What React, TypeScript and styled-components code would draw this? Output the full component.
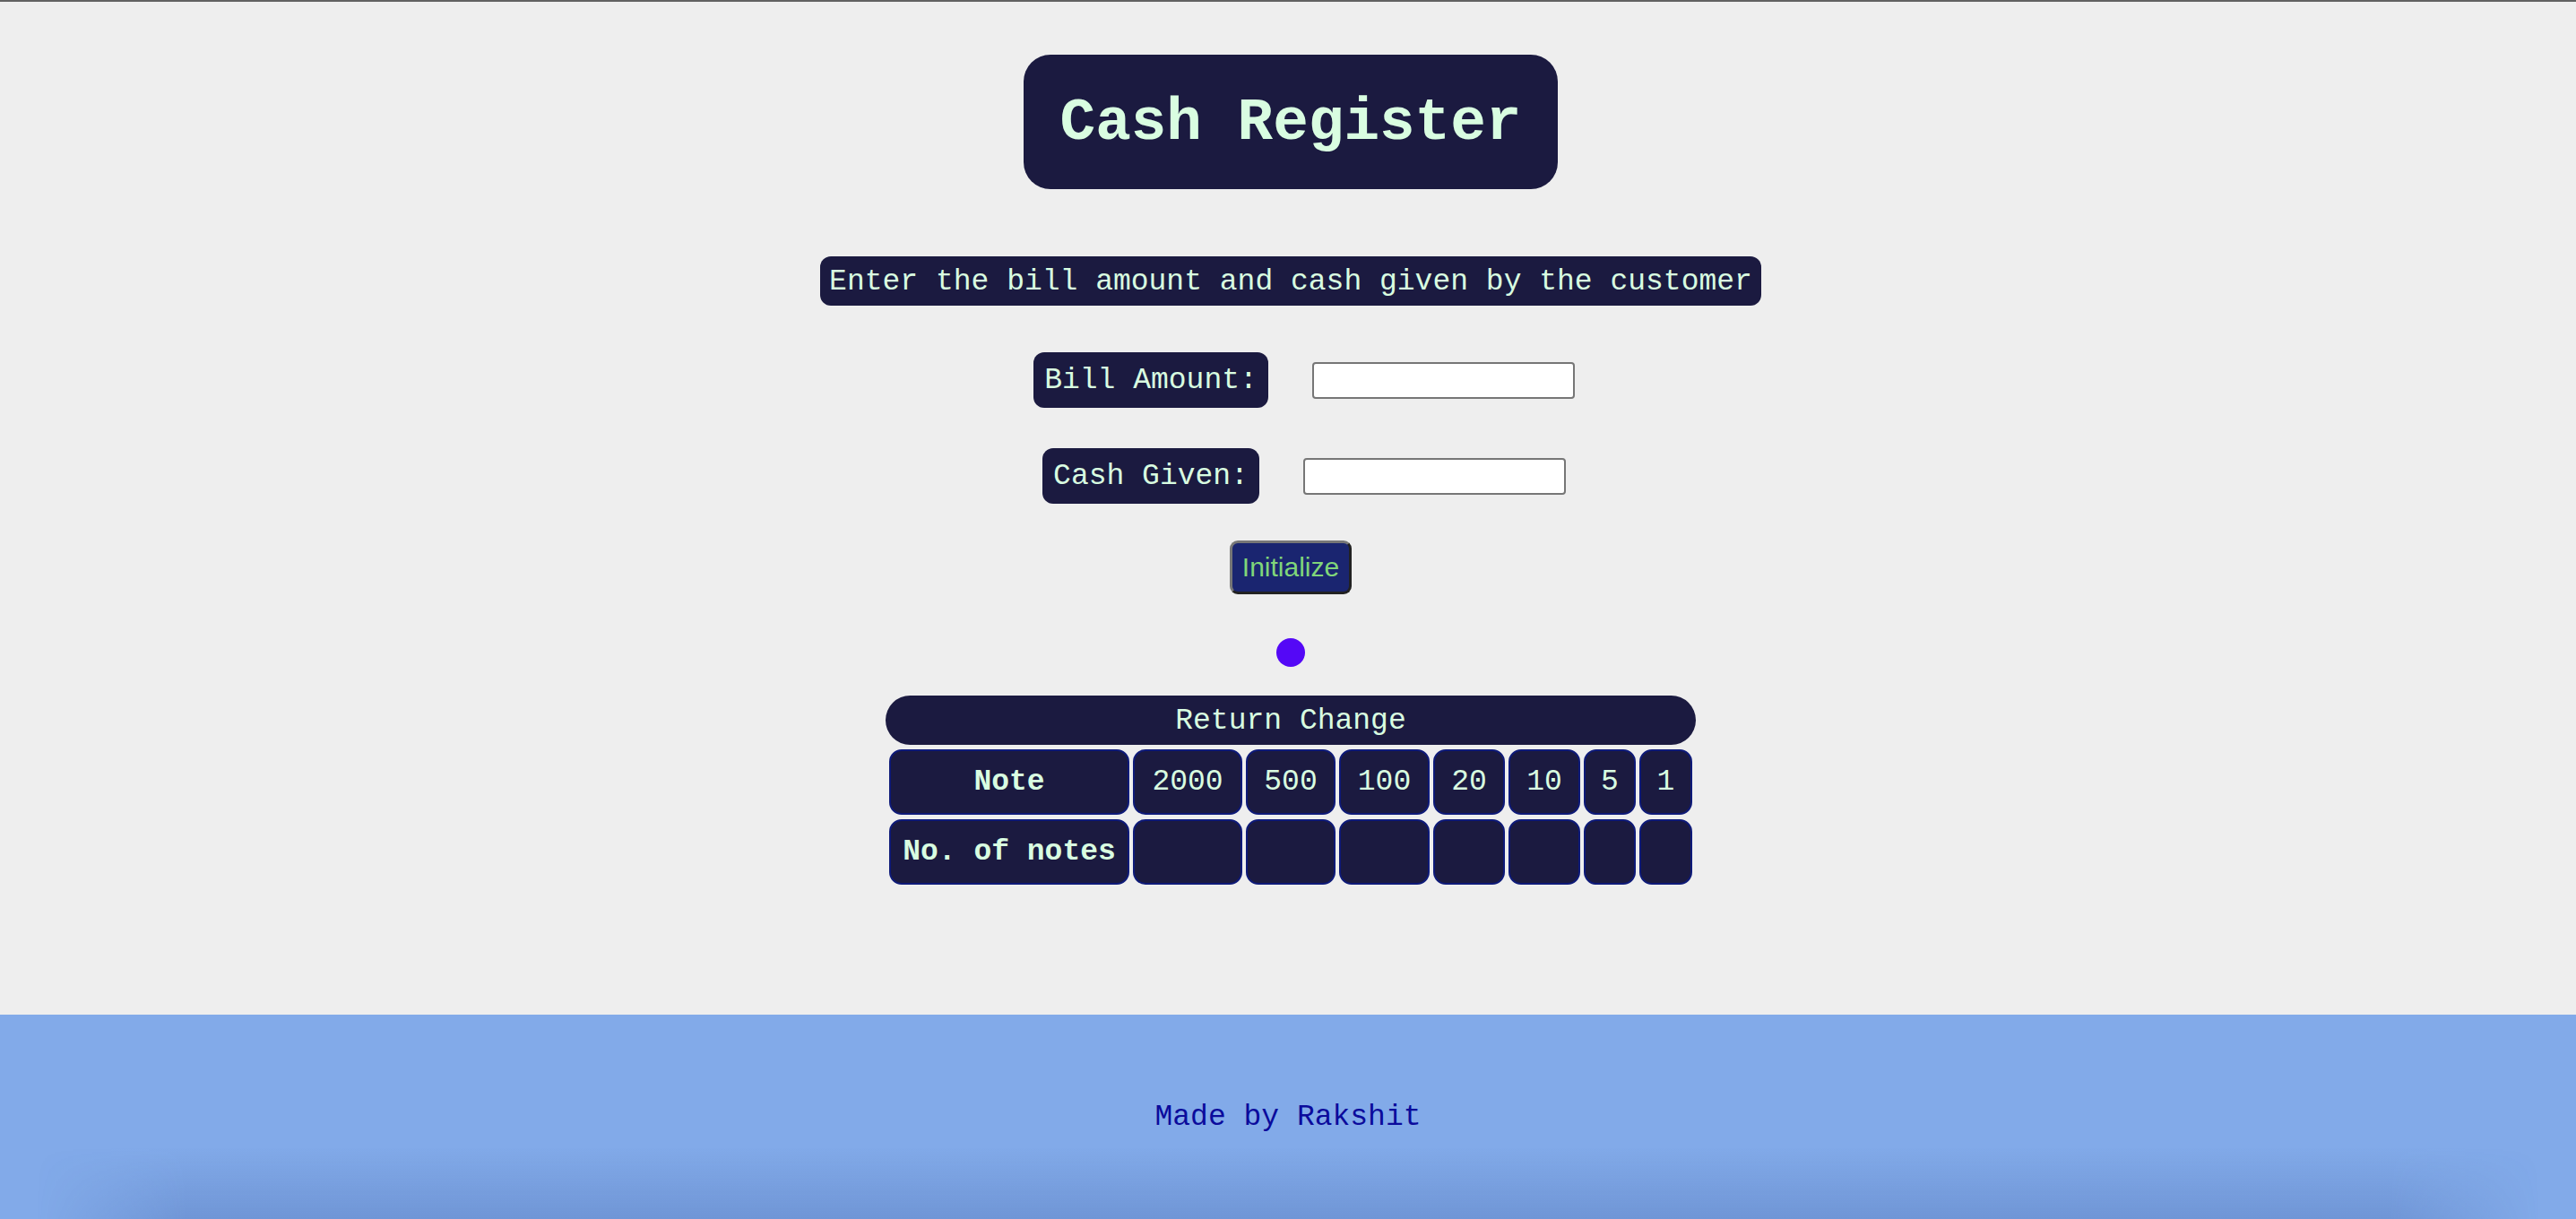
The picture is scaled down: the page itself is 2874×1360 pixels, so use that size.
import { styled, createGlobalStyle } from "styled-components"

const GlobalStyle = createGlobalStyle`
  html, body {
    margin: 0;
    padding: 0;
    background-color: #eeeeee;
  }

  body {
    font-family: "Liberation Mono", "DejaVu Sans Mono", monospace;
  }

  * {
    box-sizing: border-box;
  }
`

const NOTES = [2000, 500, 100, 20, 10, 5, 1]
const COLUMN_WIDTHS = [268, 122, 100, 101, 80, 80, 58, 59]

const App = () => {
  return (
    <Page>
      <GlobalStyle />
      <Main>
        <Title>Cash Register</Title>
        <Subtitle>Enter the bill amount and cash given by the customer</Subtitle>

        <FieldRow $top={52}>
          <FieldLabel htmlFor="bill-amount">Bill Amount:</FieldLabel>
          <FieldInput id="bill-amount" type="number" />
        </FieldRow>

        <FieldRow $top={45}>
          <FieldLabel htmlFor="cash-given">Cash Given:</FieldLabel>
          <FieldInput id="cash-given" type="number" />
        </FieldRow>

        <InitButton type="button">Initialize</InitButton>

        <StatusDot />

        <ChangeTable>
          <Caption>Return Change</Caption>
          <colgroup>
            {COLUMN_WIDTHS.map((w, i) => (
              <Col key={i} $w={w} />
            ))}
          </colgroup>
          <tbody>
            <tr>
              <HeadCell>Note</HeadCell>
              {NOTES.map((n) => (
                <Cell key={n}>{n}</Cell>
              ))}
            </tr>
            <tr>
              <HeadCell>No. of notes</HeadCell>
              {NOTES.map((n) => (
                <Cell key={n} />
              ))}
            </tr>
          </tbody>
        </ChangeTable>
      </Main>

      <Footer>Made by Rakshit</Footer>
    </Page>
  )
}

const Page = styled.div`
  display: flex;
  flex-direction: column;
  min-height: 100vh;
  border-top: 2px solid #616161;
`

const Main = styled.main`
  flex: 1;
  display: flex;
  flex-direction: column;
  align-items: center;
  padding-left: 6px;
`

const Badge = styled.div`
  background-color: #1b1a40;
  color: #d9fde1;
  font-size: 33px;
  line-height: 43px;
`

const Title = styled.h1`
  margin: 59px 0 0;
  padding: 34px 41px 30px;
  background-color: #1b1a40;
  color: #d9fde1;
  border-radius: 30px;
  font-size: 66px;
  font-weight: 700;
  line-height: 86px;
`

const Subtitle = styled(Badge)`
  margin-top: 75px;
  padding: 7px 10px 5px;
  border-radius: 12px;
`

const FieldRow = styled.div<{ $top: number }>`
  display: flex;
  align-items: center;
  gap: 49px;
  margin-top: ${(p) => p.$top}px;
  padding-left: 30px;
`

const FieldLabel = styled(Badge).attrs({ as: "label" })<{ htmlFor?: string }>`
  display: block;
  padding: 10px 12px 9px;
  border-radius: 12px;
`

const FieldInput = styled.input`
  width: 293px;
  height: 41px;
  border: 2px solid #767676;
  border-radius: 4px;
  background-color: #ffffff;
  font-size: 24px;
  padding: 0 6px;
  appearance: textfield;

  &::-webkit-outer-spin-button,
  &::-webkit-inner-spin-button {
    -webkit-appearance: none;
    margin: 0;
  }
`

const InitButton = styled.button`
  margin-top: 41px;
  height: 60px;
  padding: 0 11px;
  background-color: #1a2570;
  color: #80d67a;
  border: 3px solid;
  border-color: #777777 #222222 #222222 #777777;
  border-radius: 9px;
  font-family: "Liberation Sans", Arial, sans-serif;
  font-size: 30px;
  line-height: 34px;
  cursor: pointer;
`

const StatusDot = styled.div`
  margin-top: 49px;
  width: 32px;
  height: 32px;
  border-radius: 50%;
  background-color: #5408f6;
`

const ChangeTable = styled.table`
  margin-top: 32px;
  width: 904px;
  table-layout: fixed;
  border-collapse: separate;
  border-spacing: 4px 5px;
`

const Caption = styled.caption`
  background-color: #1b1a40;
  color: #d9fde1;
  font-size: 33px;
  line-height: 43px;
  padding: 7px 0 5px;
  border-radius: 28px;
  text-align: center;
`

const Col = styled.col<{ $w: number }>`
  width: ${(p) => p.$w}px;
`

const Cell = styled.td`
  height: 73px;
  padding: 0;
  background-color: #1b1a40;
  color: #d9fde1;
  border: 2px solid #0e1a78;
  border-radius: 14px;
  font-size: 33px;
  line-height: 43px;
  text-align: center;
  vertical-align: middle;
`

const HeadCell = styled(Cell).attrs({ as: "th" })`
  font-weight: 700;
  white-space: nowrap;
`

const Footer = styled.footer`
  position: relative;
  height: 228px;
  display: flex;
  align-items: center;
  justify-content: center;
  background-color: #82aae9;
  color: #0b0b9c;
  font-size: 33px;

  /* soft darker band along the bottom edge, fading out toward the sides */
  &::after {
    content: "";
    position: absolute;
    left: 40px;
    right: 40px;
    bottom: 0;
    height: 80px;
    background: linear-gradient(
      to bottom,
      rgba(40, 70, 140, 0),
      rgba(40, 70, 140, 0.2)
    );
    mask-image: linear-gradient(
      to right,
      transparent,
      #000 6%,
      #000 94%,
      transparent
    );
    pointer-events: none;
  }
`

export default App
